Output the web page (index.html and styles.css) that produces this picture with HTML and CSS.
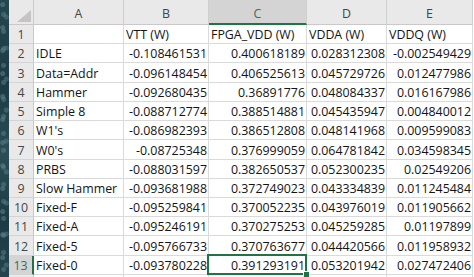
FILE: index.html
```html
<!DOCTYPE html>
<html lang="en">
<head>
<meta charset="utf-8">
<title>Sheet</title>
<link rel="stylesheet" href="styles.css">
</head>
<body>
<div class="screen">
  <div class="strip"></div>
  <div class="sheet">
    <div class="corner"><svg width="14" height="12" viewBox="0 0 14 12"><polygon points="14,0 14,12 0,12" fill="#c4c4c4"/></svg></div>
    <div class="colhead">A</div>
    <div class="colhead">B</div>
    <div class="colhead active">C</div>
    <div class="colhead">D</div>
    <div class="colhead">E</div>

    <div class="rh">1</div><div class="c txt"></div><div class="c txt">VTT (W)</div><div class="c txt">FPGA_VDD (W)</div><div class="c txt">VDDA (W)</div><div class="c txt">VDDQ (W)</div>
    <div class="rh">2</div><div class="c txt">IDLE</div><div class="c num">-0.108461531</div><div class="c num">0.400618189</div><div class="c num">0.028312308</div><div class="c num">-0.002549429</div>
    <div class="rh">3</div><div class="c txt">Data=Addr</div><div class="c num">-0.096148454</div><div class="c num">0.406525613</div><div class="c num">0.045729726</div><div class="c num">0.012477986</div>
    <div class="rh">4</div><div class="c txt">Hammer</div><div class="c num">-0.092680435</div><div class="c num">0.36891776</div><div class="c num">0.048084337</div><div class="c num">0.016167986</div>
    <div class="rh">5</div><div class="c txt">Simple 8</div><div class="c num">-0.088712774</div><div class="c num">0.388514881</div><div class="c num">0.045435947</div><div class="c num">0.004840012</div>
    <div class="rh">6</div><div class="c txt">W1's</div><div class="c num">-0.086982393</div><div class="c num">0.386512808</div><div class="c num">0.048141968</div><div class="c num">0.009599083</div>
    <div class="rh">7</div><div class="c txt">W0's</div><div class="c num">-0.08725348</div><div class="c num">0.376999059</div><div class="c num">0.064781842</div><div class="c num">0.034598345</div>
    <div class="rh">8</div><div class="c txt">PRBS</div><div class="c num">-0.088031597</div><div class="c num">0.382650537</div><div class="c num">0.052300235</div><div class="c num">0.02549206</div>
    <div class="rh">9</div><div class="c txt">Slow Hammer</div><div class="c num">-0.093681988</div><div class="c num">0.372749023</div><div class="c num">0.043334839</div><div class="c num">0.011245484</div>
    <div class="rh">10</div><div class="c txt">Fixed-F</div><div class="c num">-0.095259841</div><div class="c num">0.370052235</div><div class="c num">0.043976019</div><div class="c num">0.011905662</div>
    <div class="rh">11</div><div class="c txt">Fixed-A</div><div class="c num">-0.095246191</div><div class="c num">0.370275253</div><div class="c num">0.045259285</div><div class="c num">0.01197899</div>
    <div class="rh">12</div><div class="c txt">Fixed-5</div><div class="c num">-0.095766733</div><div class="c num">0.370763677</div><div class="c num">0.044420566</div><div class="c num">0.011958932</div>
    <div class="rh active">13</div><div class="c txt">Fixed-0</div><div class="c num">-0.093780228</div><div class="c num sel">0.391293191</div><div class="c num">0.053201942</div><div class="c num">0.027472406</div>
    <div class="rh"></div><div class="c"></div><div class="c"></div><div class="c"></div><div class="c"></div><div class="c"></div>
  </div>
</div>
</body>
</html>
```

FILE: styles.css
```css
html, body {
  margin: 0;
  padding: 0;
  background: #ffffff;
  overflow: hidden;
}

.screen {
  display: flex;
  width: 474px;
  height: 277px;
  overflow: hidden;
  font-family: "Open Sans", "Liberation Sans", sans-serif;
  font-size: 12.4px;
  color: #141414;
}

.strip {
  flex: 0 0 9px;
  background:
    radial-gradient(circle at 30% 20%, rgba(90, 130, 140, 0.55) 0 2px, transparent 3px),
    radial-gradient(circle at 70% 55%, rgba(90, 130, 140, 0.45) 0 2px, transparent 3px),
    radial-gradient(circle at 40% 85%, rgba(90, 130, 140, 0.5) 0 2px, transparent 3px),
    linear-gradient(180deg, #254750 0%, #1c3a44 30%, #2b4d56 55%, #1d3b45 80%, #24434c 100%);
  background-size: 9px 23px, 9px 31px, 9px 17px, 100% 100%;
}

.sheet {
  display: grid;
  grid-template-columns: 25px 90px 85px 98px 80px 86px;
  grid-template-rows: 25px repeat(14, 19.22px);
  align-content: start;
}

.corner,
.colhead,
.rh,
.c {
  box-sizing: border-box;
  display: flex;
  align-items: flex-end;
  line-height: 16px;
  white-space: nowrap;
  overflow: hidden;
}

.corner {
  background: #e9e9e9;
  border-right: 1px solid #c9c9c9;
  border-bottom: 1px solid #c9c9c9;
  justify-content: flex-end;
  padding: 0 2px 2px 0;
}

.corner svg {
  display: block;
}

.colhead {
  background: #e9e9e9;
  border-right: 1px solid #cfcfcf;
  border-bottom: 1px solid #c9c9c9;
  justify-content: center;
  padding-bottom: 2px;
  color: #454545;
}

.colhead.active {
  background: #d4d4d4;
  border-bottom: 2px solid #217346;
  padding-bottom: 1px;
  color: #3c6e52;
}

.rh {
  background: #e9e9e9;
  border-right: 1px solid #c9c9c9;
  border-bottom: 1px solid #d4d4d4;
  justify-content: center;
  color: #454545;
}

.rh.active {
  background: #d4d4d4;
  border-right: 2px solid #217346;
  color: #3c6e52;
}

.c {
  background: #ffffff;
  border-right: 1px solid #dadada;
  border-bottom: 1px solid #dadada;
}

.txt {
  justify-content: flex-start;
  padding-left: 2px;
}

.num {
  justify-content: flex-end;
  padding-right: 1px;
}

.sel {
  position: relative;
  overflow: visible;
}

.sel::before {
  content: "";
  position: absolute;
  left: -2px;
  top: -2px;
  right: -1px;
  bottom: -1px;
  border: 2px solid #217346;
  pointer-events: none;
}

.sel::after {
  content: "";
  position: absolute;
  right: -4px;
  bottom: -4px;
  width: 5px;
  height: 5px;
  background: #217346;
  border: 1px solid #ffffff;
}
```
